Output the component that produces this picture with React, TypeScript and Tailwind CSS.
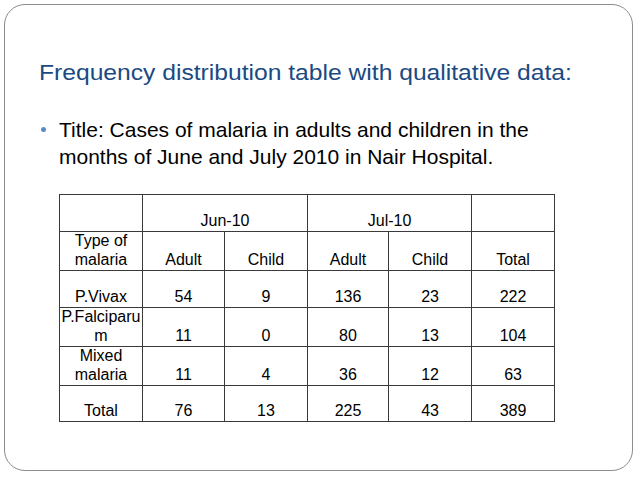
const rows = [
  { label: ['P.Vivax'], values: [54, 9, 136, 23, 222], h: 'h-[37px]' },
  { label: ['P.Falciparu', 'm'], values: [11, 0, 80, 13, 104], h: 'h-[37px]' },
  { label: ['Mixed', 'malaria'], values: [11, 4, 36, 12, 63], h: 'h-[38px]' },
  { label: ['Total'], values: [76, 13, 225, 43, 389], h: 'h-[36px]' },
]

const cell = 'border border-[#3a3a3a] align-bottom text-center pb-[1px] px-0 leading-[18.5px]'

export default function App() {
  return (
    <div className="w-[638px] h-[478px] bg-white pt-[4px] pl-[4px] font-['Liberation_Sans',Arial,sans-serif]">
      <div className="w-[629px] h-[467px] rounded-[21px] border border-[#8c8c8c] overflow-hidden">
        {/* slide title */}
        <h1 className="mt-[55px] ml-[34px] text-[22px] leading-[26px] text-[#1b4a82] origin-left scale-x-[1.12] whitespace-nowrap">
          Frequency distribution table with qualitative data:
        </h1>

        <div className="mt-[30px] flex items-start">
          <span className="ml-[36px] mt-[11px] w-[5px] h-[5px] rounded-full bg-[#5a8ac6] shrink-0" />
          <p className="ml-[13px] text-[21px] leading-[27px] text-black">
            Title: Cases of malaria in adults and children in the
            <br />
            months of June and July 2010 in Nair Hospital.
          </p>
        </div>

        <table className="mt-[24px] ml-[54px] w-[495px] table-fixed border-collapse text-[16px] text-black">
          <colgroup>
            <col className="w-[83px]" />
            <col className="w-[82px]" />
            <col className="w-[83px]" />
            <col className="w-[81px]" />
            <col className="w-[83px]" />
            <col className="w-[83px]" />
          </colgroup>
          <tbody>
            <tr className="h-[37px]">
              <td className={cell}></td>
              <td className={cell} colSpan={2}>Jun-10</td>
              <td className={cell} colSpan={2}>Jul-10</td>
              <td className={cell}></td>
            </tr>
            <tr className="h-[37px]">
              <td className={cell}>
                Type of
                <br />
                malaria
              </td>
              <td className={cell}>Adult</td>
              <td className={cell}>Child</td>
              <td className={cell}>Adult</td>
              <td className={cell}>Child</td>
              <td className={cell}>Total</td>
            </tr>
            {rows.map((r, i) => (
              <tr key={i} className={r.h}>
                <td className={cell}>
                  {r.label.map((l, j) => (
                    <div key={j}>{l}</div>
                  ))}
                </td>
                {r.values.map((v, j) => (
                  <td key={j} className={cell}>{v}</td>
                ))}
              </tr>
            ))}
          </tbody>
        </table>
      </div>
    </div>
  )
}
